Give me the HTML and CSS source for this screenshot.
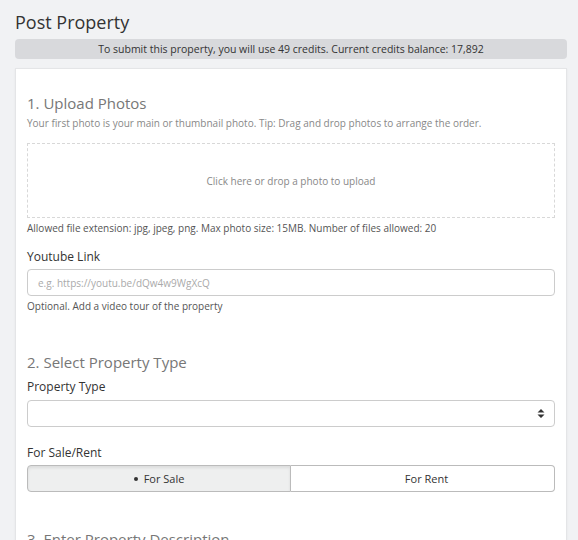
FILE: index.html
```html
<!DOCTYPE html>
<html lang="en">
<head>
<meta charset="utf-8">
<title>Post Property</title>
<link rel="stylesheet" href="styles.css">
</head>
<body>
<div class="page">
  <h1 class="title">Post Property</h1>
  <div class="credits">To submit this property, you will use 49 credits. Current credits balance: 17,892</div>
  <div class="card">
    <h2 class="section">1. Upload Photos</h2>
    <p class="hint">Your first photo is your main or thumbnail photo. Tip: Drag and drop photos to arrange the order.</p>
    <div class="dropzone">Click here or drop a photo to upload</div>
    <p class="help">Allowed file extension: jpg, jpeg, png. Max photo size: 15MB. Number of files allowed: 20</p>

    <label class="label">Youtube Link</label>
    <div class="input"><span class="placeholder">e.g. https://youtu.be/dQw4w9WgXcQ</span></div>
    <p class="help">Optional. Add a video tour of the property</p>

    <h2 class="section section2">2. Select Property Type</h2>
    <label class="label label-first">Property Type</label>
    <div class="input select">
      <svg class="caret" width="8" height="11" viewBox="0 0 8 11"><path d="M4 1 L7.5 4.5 H0.5 Z M4 10 L7.5 6.5 H0.5 Z" fill="#333"/></svg>
    </div>

    <label class="label label-gap">For Sale/Rent</label>
    <div class="btn-group">
      <div class="btn active"><span class="dot"></span>For Sale</div>
      <div class="btn">For Rent</div>
    </div>

    <h2 class="section section3">3. Enter Property Description</h2>
  </div>
</div>
</body>
</html>
```

FILE: styles.css
```css
* { box-sizing: border-box; }
html, body { margin: 0; padding: 0; height: 100%; overflow: hidden; }
body {
  background: #f1f2f4;
  font-family: "Open Sans", "Noto Sans", sans-serif;
  color: #333;
}
.page {
  padding: 8px 11px 0 15px;
}
.title {
  margin: 0;
  font-size: 18px;
  font-weight: 400;
  line-height: 28px;
  color: #333;
}
.credits {
  margin-top: 3px;
  height: 20px;
  line-height: 20px;
  background: #d8d9dc;
  border-radius: 4px;
  text-align: center;
  font-size: 10.5px;
  color: #333;
}
.card {
  margin-top: 9px;
  background: #fff;
  border: 1px solid #e4e5e7;
  box-shadow: 0 1px 2px rgba(0,0,0,0.06);
  padding: 22px 11px 40px 11px;
  min-height: 600px;
}
.section {
  margin: 0;
  font-size: 15px;
  font-weight: 400;
  line-height: 24px;
  color: #777;
}
.hint {
  margin: 0;
  font-size: 10px;
  line-height: 16px;
  color: #888;
}
.dropzone {
  margin-top: 12px;
  height: 75px;
  border: 1px dashed #d8d8d8;
  display: flex;
  align-items: center;
  justify-content: center;
  font-size: 10px;
  color: #888;
}
.help {
  margin: 2px 0 0;
  font-size: 10px;
  line-height: 16px;
  color: #555;
}
.label {
  display: block;
  margin-top: 12px;
  font-size: 12px;
  line-height: 18px;
  color: #333;
}
.input {
  margin-top: 3px;
  height: 27px;
  border: 1px solid #ccc;
  border-radius: 4px;
  background: #fff;
  display: flex;
  align-items: center;
  padding: 0 10px;
}
.placeholder {
  font-size: 10px;
  color: #aaa;
}
.select { justify-content: flex-end; padding-right: 9px; margin-top: 4px; }
.section2 { margin-top: 36px; }
.label.label-first { margin-top: 4px; }
.label.label-gap { margin-top: 17px; }
.btn-group {
  margin-top: 3px;
  display: flex;
  height: 27px;
}
.btn {
  flex: 0 0 50%;
  display: flex;
  align-items: center;
  justify-content: center;
  border: 1px solid #bbb;
  background: #fff;
  font-size: 11px;
  color: #333;
}
.btn:first-child { border-radius: 4px 0 0 4px; }
.btn:last-child { border-radius: 0 4px 4px 0; border-left: 0; padding-left: 8px; }
.btn.active {
  background: #eeefef;
  box-shadow: inset 0 2px 3px rgba(0,0,0,0.08);
}
.dot {
  width: 4px; height: 4px; border-radius: 50%;
  background: #333;
  margin-right: 6px;
}
.section3 { margin-top: 35px; }
```
